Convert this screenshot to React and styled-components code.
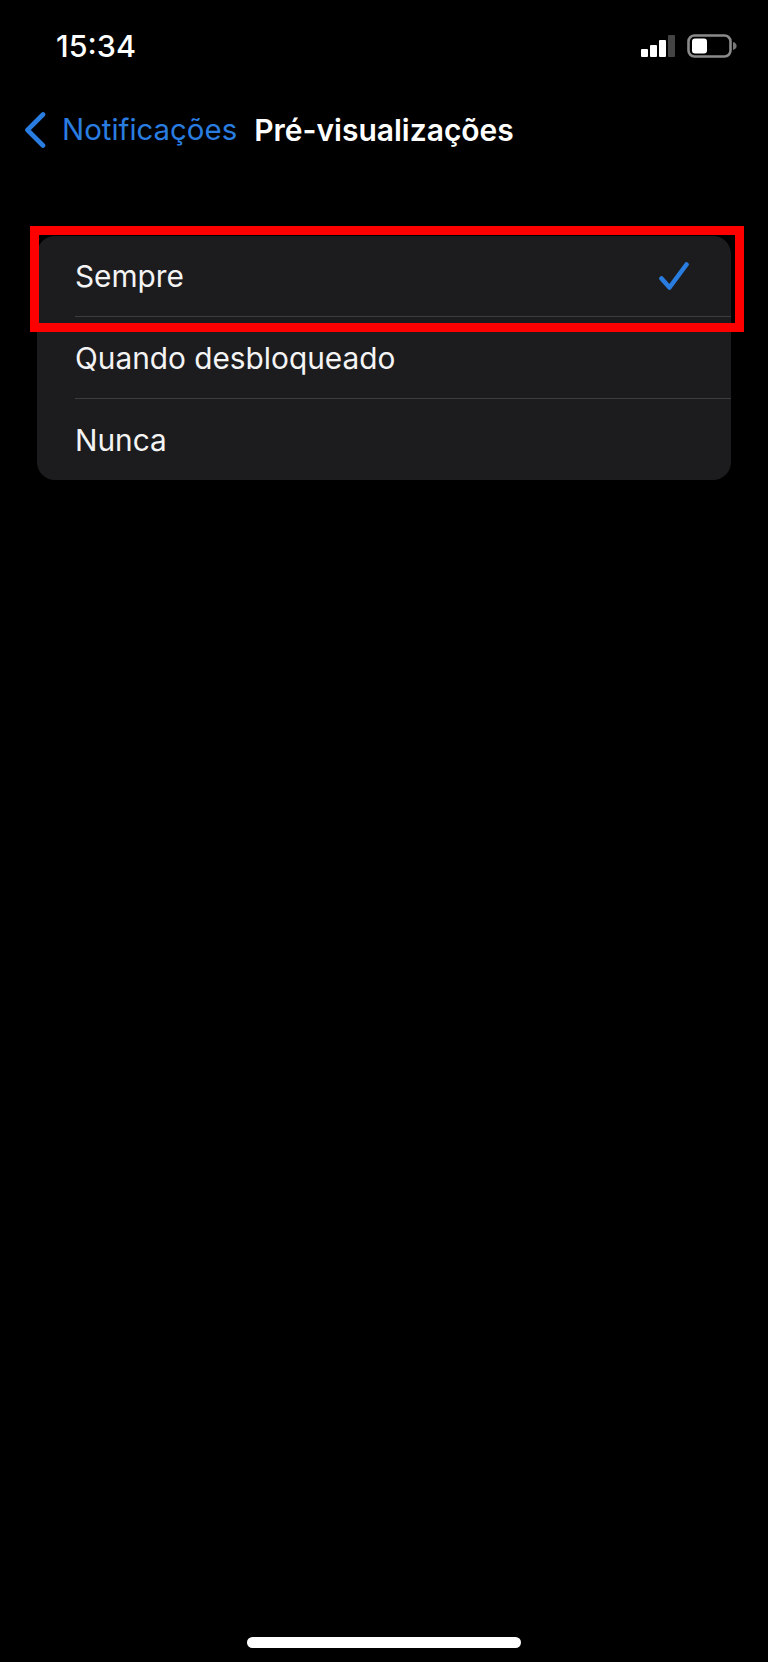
import React from 'react'
import styled, { createGlobalStyle } from 'styled-components'

const GlobalStyle = createGlobalStyle`
  html, body {
    margin: 0;
    padding: 0;
    background: #000;
  }
  * {
    box-sizing: border-box;
  }
`

const Screen = styled.div`
  width: 768px;
  height: 1662px;
  background: #000;
  color: #fff;
  font-family: Inter, "Liberation Sans", sans-serif;
  display: flex;
  flex-direction: column;
  -webkit-font-smoothing: antialiased;
`

const StatusBar = styled.div`
  height: 92px;
  padding: 28px 31px 0 56px;
  display: flex;
  justify-content: space-between;
  align-items: flex-start;
`

const Time = styled.div`
  font-size: 30.5px;
  font-weight: 500;
  line-height: 35px;
`

const StatusIcons = styled.div`
  display: flex;
  align-items: center;
  gap: 12px;
  padding-top: 6px;
`

const NavBar = styled.div`
  height: 76px;
  padding-left: 24px;
  display: flex;
  align-items: center;
`

const BackLink = styled.div`
  display: flex;
  align-items: center;
  gap: 16px;
  color: #2a7de0;
  font-size: 29.4px;
  line-height: 36px;
`

const NavTitle = styled.div`
  margin-left: 17px;
  font-size: 30px;
  font-weight: 600;
  line-height: 36px;
`

const CardArea = styled.div`
  position: relative;
  margin: 68px 37px 0;
`

const Card = styled.div`
  background: #1c1c1f;
  border-radius: 18px;
  overflow: hidden;
`

const Row = styled.div`
  height: ${(p) => p.$height}px;
  margin-left: 38px;
  padding-right: 42px;
  display: flex;
  justify-content: space-between;
  align-items: center;
  font-size: 29.8px;
  color: #f4f4f4;
  border-bottom: ${(p) => (p.$last ? 'none' : '1px solid #3d3d40')};
`

const Highlight = styled.div`
  position: absolute;
  left: -7px;
  top: -10px;
  width: 714px;
  height: 106px;
  border: 9px solid #ff0000;
  pointer-events: none;
`

const Spacer = styled.div`
  flex: 1;
`

const HomeBarWrap = styled.div`
  display: flex;
  justify-content: center;
  padding-bottom: 14px;
`

const HomeBar = styled.div`
  width: 274px;
  height: 11px;
  border-radius: 6px;
  background: #fff;
`

const SignalIcon = () => (
  <svg width="34" height="22" viewBox="0 0 34 22">
    <rect x="0" y="14" width="7" height="8" rx="1" fill="#fff" />
    <rect x="9" y="10" width="7" height="12" rx="1" fill="#fff" />
    <rect x="18" y="5" width="7" height="17" rx="1" fill="#fff" />
    <rect x="27" y="0" width="7" height="22" rx="1" fill="#444" />
  </svg>
)

const BatteryIcon = () => (
  <svg width="50" height="24" viewBox="0 0 50 24">
    <rect x="1.5" y="1.5" width="42" height="21" rx="6" fill="none" stroke="#8a8a8a" strokeWidth="2.6" />
    <rect x="5" y="4.5" width="15" height="15" rx="3" fill="#fff" />
    <path d="M46 8c2.4.6 3.6 2.2 3.6 4s-1.2 3.4-3.6 4z" fill="#777" />
  </svg>
)

const BackChevron = () => (
  <svg width="22" height="36" viewBox="0 0 22 36">
    <path d="M19 2.5 3.5 18 19 33.5" fill="none" stroke="#2a7de0" strokeWidth="4.6" strokeLinecap="round" strokeLinejoin="round" />
  </svg>
)

const CheckIcon = () => (
  <svg width="30" height="30" viewBox="0 0 30 30">
    <path d="M2.5 17.5 10.5 26.5 27.5 3.5" fill="none" stroke="#2a7de0" strokeWidth="4.6" strokeLinecap="round" strokeLinejoin="round" />
  </svg>
)

const App = () => {
  return (
    <Screen>
      <GlobalStyle />
      <StatusBar>
        <Time>15:34</Time>
        <StatusIcons>
          <SignalIcon />
          <BatteryIcon />
        </StatusIcons>
      </StatusBar>
      <NavBar>
        <BackLink>
          <BackChevron />
          Notificações
        </BackLink>
        <NavTitle>Pré-visualizações</NavTitle>
      </NavBar>
      <CardArea>
        <Card>
          <Row $height={81}>
            Sempre
            <CheckIcon />
          </Row>
          <Row $height={82}>Quando desbloqueado</Row>
          <Row $height={81} $last>Nunca</Row>
        </Card>
        <Highlight />
      </CardArea>
      <Spacer />
      <HomeBarWrap>
        <HomeBar />
      </HomeBarWrap>
    </Screen>
  )
}

export default App
